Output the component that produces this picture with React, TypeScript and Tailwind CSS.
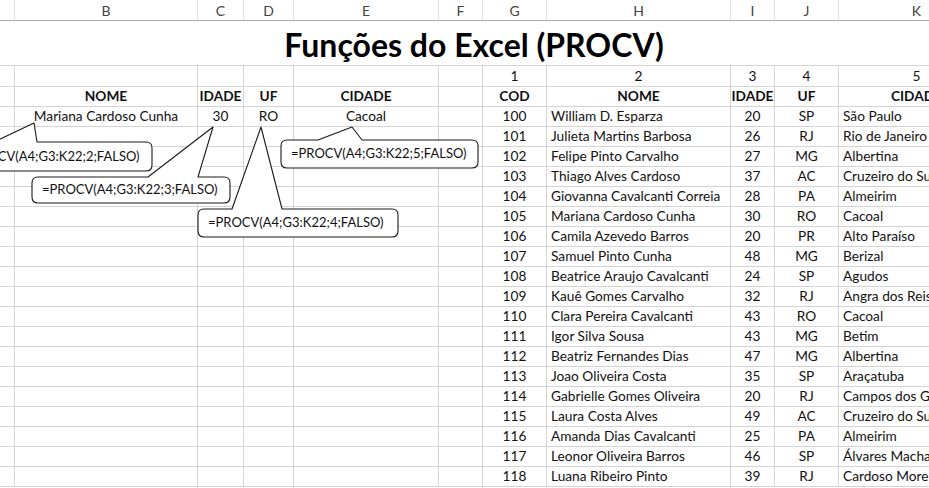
import React from "react";

const LETTERS = ["", "B", "C", "D", "E", "F", "G", "H", "I", "J", "K"];

const DATA: [string, string, string, string, string][] = [
  ["100", "William D. Esparza", "20", "SP", "São Paulo"],
  ["101", "Julieta Martins Barbosa", "26", "RJ", "Rio de Janeiro"],
  ["102", "Felipe Pinto Carvalho", "27", "MG", "Albertina"],
  ["103", "Thiago Alves Cardoso", "37", "AC", "Cruzeiro do Sul"],
  ["104", "Giovanna Cavalcanti Correia", "28", "PA", "Almeirim"],
  ["105", "Mariana Cardoso Cunha", "30", "RO", "Cacoal"],
  ["106", "Camila Azevedo Barros", "20", "PR", "Alto Paraíso"],
  ["107", "Samuel Pinto Cunha", "48", "MG", "Berizal"],
  ["108", "Beatrice Araujo Cavalcanti", "24", "SP", "Agudos"],
  ["109", "Kauê Gomes Carvalho", "32", "RJ", "Angra dos Reis"],
  ["110", "Clara Pereira Cavalcanti", "43", "RO", "Cacoal"],
  ["111", "Igor Silva Sousa", "43", "MG", "Betim"],
  ["112", "Beatriz Fernandes Dias", "47", "MG", "Albertina"],
  ["113", "Joao Oliveira Costa", "35", "SP", "Araçatuba"],
  ["114", "Gabrielle Gomes Oliveira", "20", "RJ", "Campos dos Goytacazes"],
  ["115", "Laura Costa Alves", "49", "AC", "Cruzeiro do Sul"],
  ["116", "Amanda Dias Cavalcanti", "25", "PA", "Almeirim"],
  ["117", "Leonor Oliveira Barros", "46", "SP", "Álvares Machado"],
  ["118", "Luana Ribeiro Pinto", "39", "RJ", "Cardoso Moreira"],
];

type Align = "c" | "l";

function Cell({ children, align = "c", bold = false, tall = false }: { children?: React.ReactNode; align?: Align; bold?: boolean; tall?: boolean }) {
  return (
    <div
      className={
        (tall ? "h-[21px] " : "h-[20px] ") +
        "border-r border-b border-[#d4d4d4] flex items-center overflow-hidden whitespace-nowrap " +
        (align === "c" ? "justify-center" : "justify-start pl-[4px]") +
        (bold ? " font-bold" : "")
      }
    >
      {children}
    </div>
  );
}

type CalloutDef = {
  x1: number;
  y1: number;
  x2: number;
  y2: number;
  b1: number;
  b2: number;
  tx: number;
  ty: number;
  text: string;
};

const CALLOUTS: CalloutDef[] = [
  { x1: -46, y1: 142, x2: 152, y2: 171, b1: -6, b2: 37, tx: 34, ty: 123, text: "=PROCV(A4;G3:K22;2;FALSO)" },
  { x1: 32, y1: 177, x2: 230, y2: 203, b1: 148, b2: 198, tx: 213, ty: 127, text: "=PROCV(A4;G3:K22;3;FALSO)" },
  { x1: 198, y1: 209, x2: 398, y2: 237, b1: 232, b2: 282, tx: 261, ty: 127, text: "=PROCV(A4;G3:K22;4;FALSO)" },
  { x1: 281, y1: 140, x2: 478, y2: 168, b1: 318, b2: 362, tx: 352, ty: 127, text: "=PROCV(A4;G3:K22;5;FALSO)" },
];

function calloutPath(c: CalloutDef) {
  const r = 6;
  const { x1, y1, x2, y2, b1, b2, tx, ty } = c;
  return [
    `M ${x1 + r} ${y1}`,
    `L ${b1} ${y1}`,
    `L ${tx} ${ty}`,
    `L ${b2} ${y1}`,
    `L ${x2 - r} ${y1}`,
    `Q ${x2} ${y1} ${x2} ${y1 + r}`,
    `L ${x2} ${y2 - r}`,
    `Q ${x2} ${y2} ${x2 - r} ${y2}`,
    `L ${x1 + r} ${y2}`,
    `Q ${x1} ${y2} ${x1} ${y2 - r}`,
    `L ${x1} ${y1 + r}`,
    `Q ${x1} ${y1} ${x1 + r} ${y1}`,
    "Z",
  ].join(" ");
}

export default function App() {
  const emptyLeft = (n: number) => Array.from({ length: n }, (_, i) => <Cell key={"e" + i} />);

  return (
    <div
      className="relative w-[929px] h-[488px] overflow-hidden bg-white text-[13.7px] text-[#111]"
      style={{ fontFamily: "Lato, 'Open Sans', sans-serif" }}
    >
      <div className="grid w-[995px] grid-cols-[15px_183px_46px_50px_145px_44px_64px_184px_44px_64px_156px]">
        {/* column header row */}
        {LETTERS.map((l, i) => (
          <div
            key={"h" + i}
            className="h-[21px] border-b border-[#a9a9a9] border-r border-r-[#e1e1e1] flex items-center justify-center text-[14px] text-[#444] bg-white"
          >
            {l}
          </div>
        ))}
        {/* title row */}
        <div className="col-span-11 h-[45px] border-b border-[#d4d4d4] flex items-center justify-center pr-[47px] pt-[3px]">
          <span className="font-bold text-[32px] leading-none text-black">Funções do Excel (PROCV)</span>
        </div>
        {/* row 2: index numbers */}
        {emptyLeft(6).map((c, i) => (
          <div key={"r2" + i} className="h-[21px] border-r border-b border-[#d4d4d4]" />
        ))}
        {["1", "2", "3", "4", "5"].map((n) => (
          <Cell key={"n" + n} tall>
            {n}
          </Cell>
        ))}
        {/* row 3: headers */}
        <Cell />
        <Cell bold>NOME</Cell>
        <Cell bold>IDADE</Cell>
        <Cell bold>UF</Cell>
        <Cell bold>CIDADE</Cell>
        <Cell />
        <Cell bold>COD</Cell>
        <Cell bold>NOME</Cell>
        <Cell bold>IDADE</Cell>
        <Cell bold>UF</Cell>
        <Cell bold>CIDADE</Cell>
        {/* data rows */}
        {DATA.map((row, idx) => (
          <React.Fragment key={row[0]}>
            {idx === 0 ? (
              <>
                <Cell />
                <Cell>Mariana Cardoso Cunha</Cell>
                <Cell>30</Cell>
                <Cell>RO</Cell>
                <Cell>Cacoal</Cell>
                <Cell />
              </>
            ) : (
              emptyLeft(6)
            )}
            <Cell>{row[0]}</Cell>
            <Cell align="l">{row[1]}</Cell>
            <Cell>{row[2]}</Cell>
            <Cell>{row[3]}</Cell>
            <Cell align="l">{row[4]}</Cell>
          </React.Fragment>
        ))}
      </div>

      {/* callouts overlay */}
      <svg className="absolute left-0 top-0" width={929} height={488} viewBox="0 0 929 488">
        {CALLOUTS.map((c, i) => (
          <path key={i} d={calloutPath(c)} fill="white" stroke="#1a1a1a" strokeWidth={1.1} strokeLinejoin="round" />
        ))}
      </svg>
      {CALLOUTS.map((c, i) => (
        <div
          key={"t" + i}
          className="absolute flex items-center whitespace-nowrap text-[13px] text-[#111]"
          style={{ left: c.x1 + 10, top: c.y1, height: c.y2 - c.y1 }}
        >
          {c.text}
        </div>
      ))}
    </div>
  );
}
